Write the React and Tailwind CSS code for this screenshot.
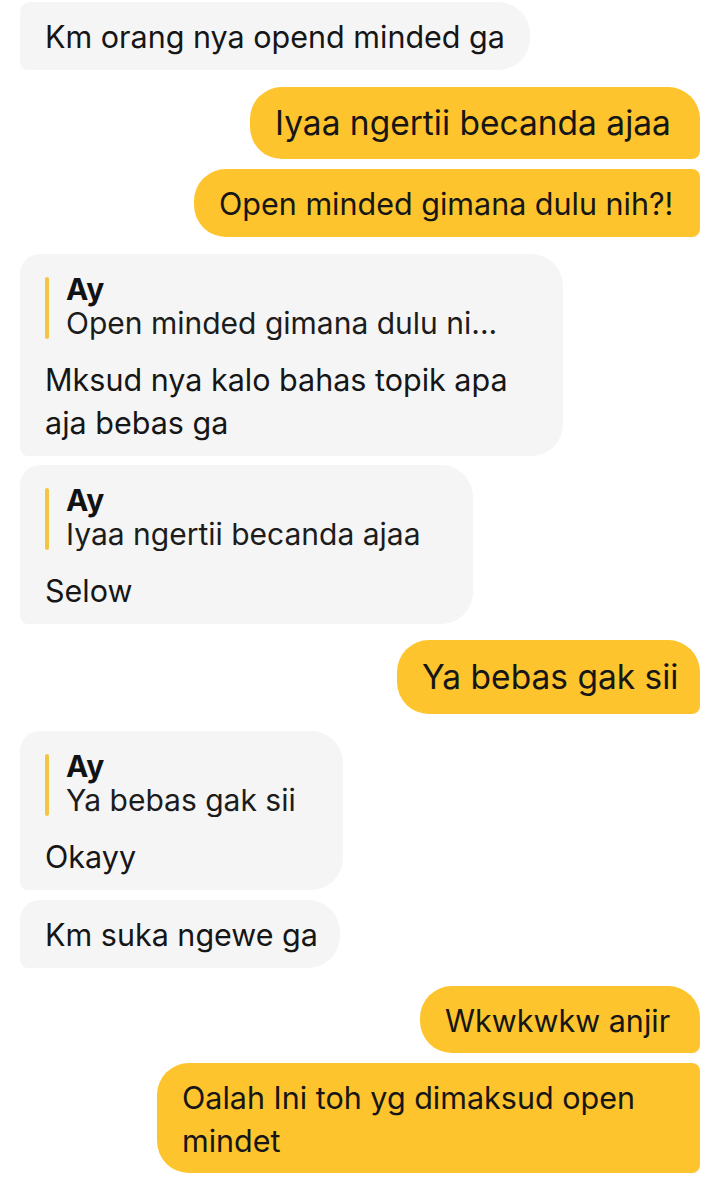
const font = { fontFamily: 'Inter, "Noto Sans", sans-serif' }

function Quote({ name, text }) {
  return (
    <div className="relative pl-[21px] mb-[18px]">
      <span className="absolute left-0 top-[5px] bottom-[1px] w-[4px] rounded-full bg-[#f4c545]" />
      <div className="font-bold text-[30px] leading-[34px] text-[#121212]">{name}</div>
      <div className="text-[30px] leading-[34px] text-[#1c1c1c] whitespace-nowrap overflow-hidden text-ellipsis">{text}</div>
    </div>
  )
}

function Received({ children, quote, first = true, className = '' }) {
  return (
    <div className="flex justify-start">
      <div
        className={`bg-[#f5f5f5] text-[#161616] px-[25px] ${quote ? 'pt-[18px]' : 'pt-[13px]'} pb-[12px] rounded-r-[32px] ${first ? 'rounded-tl-[20px]' : 'rounded-tl-[10px]'} rounded-bl-[8px] ${className}`}
      >
        {quote && <Quote name={quote.name} text={quote.text} />}
        <div className="text-[30.5px] leading-[43px]">{children}</div>
      </div>
    </div>
  )
}

function Sent({ children, first = true, className = '', big = false }) {
  return (
    <div className="flex justify-end">
      <div
        className={`bg-[#fdc42d] text-[#161616] px-[25px] rounded-l-[32px] ${first ? 'rounded-tr-[32px]' : 'rounded-tr-[8px]'} rounded-br-[8px] ${className}`}
      >
        <div className={`${big ? 'text-[33.5px]' : 'text-[30.5px]'} leading-[43px]`}>{children}</div>
      </div>
    </div>
  )
}

export default function App() {
  return (
    <div className="bg-white min-h-[1178px] w-[720px] px-[20px] pt-[2px] flex flex-col" style={font}>
      <Received first={false} className="w-[510px] whitespace-nowrap">Km orang nya opend minded ga</Received>

      <div className="mt-[17px] flex flex-col gap-[10px]">
        <Sent big className="w-[450px] pt-[15px] pb-[14px] whitespace-nowrap">Iyaa ngertii becanda ajaa</Sent>
        <Sent first={false} className="w-[506px] pt-[13px] pb-[12px] whitespace-nowrap">Open minded gimana dulu nih?!</Sent>
      </div>

      <div className="mt-[17px] flex flex-col gap-[9px]">
        <Received className="w-[543px]" quote={{ name: 'Ay', text: 'Open minded gimana dulu ni...' }}>
          Mksud nya kalo bahas topik apa aja bebas ga
        </Received>
        <Received className="w-[453px] whitespace-nowrap" quote={{ name: 'Ay', text: 'Iyaa ngertii becanda ajaa' }}>Selow</Received>
      </div>

      <div className="mt-[16px]">
        <Sent big className="w-[303px] pt-[16px] pb-[15px] whitespace-nowrap">Ya bebas gak sii</Sent>
      </div>

      <div className="mt-[17px] flex flex-col gap-[10px]">
        <Received className="w-[323px] whitespace-nowrap" quote={{ name: 'Ay', text: 'Ya bebas gak sii' }}>Okayy</Received>
        <Received className="w-[320px] whitespace-nowrap">Km suka ngewe ga</Received>
      </div>

      <div className="mt-[18px] flex flex-col gap-[10px]">
        <Sent className="w-[280px] pt-[13px] pb-[11px] whitespace-nowrap">Wkwkwkw anjir</Sent>
        <Sent first={false} className="w-[543px] pt-[13px] pb-[11px]">Oalah Ini toh yg dimaksud open mindet</Sent>
      </div>
    </div>
  )
}
